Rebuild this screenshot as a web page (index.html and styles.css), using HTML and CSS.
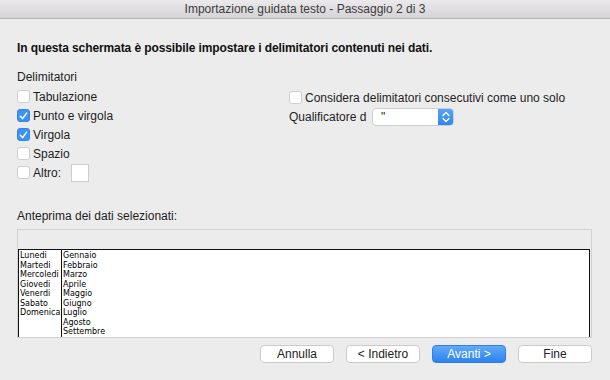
FILE: index.html
```html
<!DOCTYPE html>
<html lang="it">
<head>
<meta charset="utf-8">
<link rel="stylesheet" href="styles.css">
</head>
<body>
<div class="window">
  <div class="titlebar">Importazione guidata testo - Passaggio 2 di 3</div>
  <div class="content">
    <p class="heading">In questa schermata è possibile impostare i delimitatori contenuti nei dati.</p>
    <p class="label">Delimitatori</p>
    <div class="options">
      <div class="col-left">
        <div class="row"><span class="cb"></span><span>Tabulazione</span></div>
        <div class="row"><span class="cb checked"><svg viewBox="0 0 14 14" width="14" height="14"><path d="M3.6 7.3 L6 9.8 L10.4 3.9" fill="none" stroke="#fff" stroke-width="1.6" stroke-linecap="round" stroke-linejoin="round"/></svg></span><span>Punto e virgola</span></div>
        <div class="row"><span class="cb checked"><svg viewBox="0 0 14 14" width="14" height="14"><path d="M3.6 7.3 L6 9.8 L10.4 3.9" fill="none" stroke="#fff" stroke-width="1.6" stroke-linecap="round" stroke-linejoin="round"/></svg></span><span>Virgola</span></div>
        <div class="row"><span class="cb"></span><span>Spazio</span></div>
        <div class="row"><span class="cb"></span><span>Altro:</span><span class="other-input"></span></div>
      </div>
      <div class="col-right">
        <div class="row"><span class="cb"></span><span>Considera delimitatori consecutivi come uno solo</span></div>
        <div class="row qual"><span class="qual-label">Qualificatore d</span>
          <span class="select"><span class="select-val">"</span><span class="select-arrow"><svg viewBox="0 0 16 18" width="16" height="18"><path d="M5 7.5 L8 4.5 L11 7.5 M5 10.5 L8 13.5 L11 10.5" fill="none" stroke="#fff" stroke-width="1.3" stroke-linecap="round" stroke-linejoin="round"/></svg></span></span>
        </div>
      </div>
    </div>
    <p class="label preview-label">Anteprima dei dati selezionati:</p>
    <div class="preview">
      <div class="preview-head"></div>
      <div class="preview-body">
        <div class="pcol c1">Lunedi<br>Martedi<br>Mercoledi<br>Giovedi<br>Venerdi<br>Sabato<br>Domenica</div>
        <div class="pcol c2">Gennaio<br>Febbraio<br>Marzo<br>Aprile<br>Maggio<br>Giugno<br>Luglio<br>Agosto<br>Settembre</div>
      </div>
    </div>
    <div class="buttons">
      <button class="btn">Annulla</button>
      <button class="btn">&lt; Indietro</button>
      <button class="btn primary">Avanti &gt;</button>
      <button class="btn">Fine</button>
    </div>
  </div>
</div>
</body>
</html>
```
FILE: styles.css
```css
* { box-sizing: border-box; }
html, body { margin: 0; padding: 0; }
body {
  width: 610px;
  height: 380px;
  overflow: hidden;
  background: #ececec;
  font-family: "Liberation Sans", Arial, sans-serif;
  font-size: 12px;
  color: #1e1e1e;
}
.window { width: 610px; height: 380px; }
.titlebar {
  height: 19px;
  line-height: 18px;
  text-align: center;
  font-size: 12px;
  color: #3c3c3c;
  background: linear-gradient(#ebe9eb, #d5d3d5);
  border-bottom: 1px solid #b3b3b3;
}
.content { padding: 0 18px 0 17px; }
.heading {
  margin: 21px 0 0;
  font-weight: bold;
  line-height: 16px;
  font-size: 12px;
  letter-spacing: -0.1px;
  color: #111;
}
.label { margin: 13px 0 0; line-height: 16px; }
.options { display: flex; margin-top: 2px; }
.col-left { width: 272px; }
.col-right { padding-top: 1px; }
.row { display: flex; align-items: center; height: 19px; gap: 3px; }
.cb {
  width: 13px; height: 13px;
  background: #fff;
  border: 1px solid #cfcfcf;
  border-radius: 3px;
  display: inline-flex;
  flex: none;
}
.cb.checked { background: #3d93f5; border-color: #3385e8; }
.cb svg { margin: -1px; }
.other-input {
  width: 18px; height: 18px;
  background: #fff;
  border: 1px solid #cdcdcd;
  margin-left: 7px;
}
.qual { gap: 0; height: 20px; }
.qual-label { width: 83px; white-space: nowrap; }
.select {
  display: flex;
  width: 82px; height: 18px;
  background: #fff;
  border: 1px solid #cdcdcd;
  border-radius: 4px;
  overflow: hidden;
}
.select-val { flex: 1; padding-left: 8px; line-height: 16px; font-size: 12px; }
.select-arrow {
  width: 16px;
  margin: -1px -1px -1px 0;
  background: linear-gradient(#5aa6f8, #2f83ee);
  display: flex;
}
.preview-label { margin-top: 26px; }
.preview {
  margin-top: 5px;
  width: 575px;
  height: 109px;
  border: 1px solid #d2d2d2;
  display: flex;
  flex-direction: column;
}
.preview-head { height: 19px; background: #ececec; }
.preview-body {
  flex: 1;
  background: #fff;
  border-top: 1px solid #111;
  border-left: 1px solid #111;
  border-right: 1px solid #111;
  margin-right: 1px;
  display: flex;
  font-family: "DejaVu Sans", sans-serif;
  font-size: 8px;
  line-height: 9.5px;
  color: #000;
}
.pcol { padding: 1px 0 0 1px; }
.c1 { width: 43px; border-right: 1px solid #111; }
.buttons {
  display: flex;
  justify-content: flex-end;
  gap: 12px;
  margin-top: 7px;
}
.btn {
  width: 74px; height: 18px;
  padding: 0;
  font-family: "Liberation Sans", Arial, sans-serif;
  font-size: 12px;
  color: #222;
  background: #fff;
  border: 1px solid #cbcbcb;
  border-radius: 4px;
  line-height: 16px;
}
.btn.primary {
  color: #fff;
  background: linear-gradient(#62aaf9, #2b82ef);
  border-color: #2f80e6;
}
```
